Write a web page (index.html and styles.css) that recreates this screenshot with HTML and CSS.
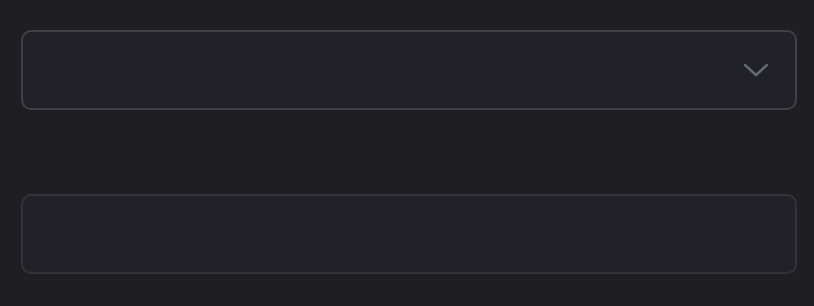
FILE: index.html
```html
<!DOCTYPE html>
<html>
<head>
<meta charset="utf-8">
<link rel="stylesheet" href="styles.css">
</head>
<body>
<div class="page">
  <div class="select">
    <svg class="chevron" width="26" height="14" viewBox="0 0 26 14" fill="none">
      <path d="M2 2 L13 12 L24 2" stroke="#646775" stroke-width="2.5" stroke-linecap="round" stroke-linejoin="round"/>
    </svg>
  </div>
  <div class="field"></div>
</div>
</body>
</html>
```
FILE: styles.css
```css
html, body {
  margin: 0;
  padding: 0;
  background: #1e1f23;
  font-family: "Inter", "Liberation Sans", sans-serif;
}
.page {
  display: flex;
  flex-direction: column;
  gap: 84px;
  padding: 30px 0 0 21px;
}
.select, .field {
  box-sizing: border-box;
  width: 776px;
  background: #212229;
  border-radius: 10px;
}
.select {
  height: 80px;
  border: 2px solid #404148;
  display: flex;
  align-items: center;
  justify-content: flex-end;
  padding-right: 26px;
}
.field {
  height: 80px;
  border: 2px solid #323339;
}
.chevron {
  display: block;
}
```
